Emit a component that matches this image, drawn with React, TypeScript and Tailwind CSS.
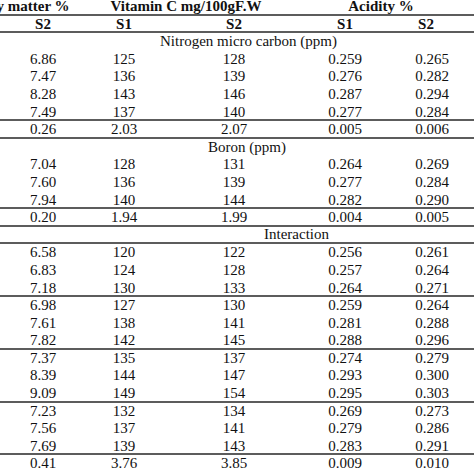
import React from 'react';

type Row =
  | { kind: 'data'; cells: string[]; line?: boolean }
  | { kind: 'section'; label: string; indent: string; line?: boolean };

const rows: Row[] = [
  { kind: 'section', label: 'Nitrogen micro carbon (ppm)', indent: 'pl-[160px]' },
  { kind: 'data', cells: ['6.86', '125', '128', '0.259', '0.265'] },
  { kind: 'data', cells: ['7.47', '136', '139', '0.276', '0.282'] },
  { kind: 'data', cells: ['8.28', '143', '146', '0.287', '0.294'] },
  { kind: 'data', cells: ['7.49', '137', '140', '0.277', '0.284'], line: true },
  { kind: 'data', cells: ['0.26', '2.03', '2.07', '0.005', '0.006'], line: true },
  { kind: 'section', label: 'Boron (ppm)', indent: 'pl-[208px]' },
  { kind: 'data', cells: ['7.04', '128', '131', '0.264', '0.269'] },
  { kind: 'data', cells: ['7.60', '136', '139', '0.277', '0.284'] },
  { kind: 'data', cells: ['7.94', '140', '144', '0.282', '0.290'], line: true },
  { kind: 'data', cells: ['0.20', '1.94', '1.99', '0.004', '0.005'], line: true },
  { kind: 'section', label: 'Interaction', indent: 'pl-[264px]', line: true },
  { kind: 'data', cells: ['6.58', '120', '122', '0.256', '0.261'] },
  { kind: 'data', cells: ['6.83', '124', '128', '0.257', '0.264'] },
  { kind: 'data', cells: ['7.18', '130', '133', '0.264', '0.271'], line: true },
  { kind: 'data', cells: ['6.98', '127', '130', '0.259', '0.264'] },
  { kind: 'data', cells: ['7.61', '138', '141', '0.281', '0.288'] },
  { kind: 'data', cells: ['7.82', '142', '145', '0.288', '0.296'], line: true },
  { kind: 'data', cells: ['7.37', '135', '137', '0.274', '0.279'] },
  { kind: 'data', cells: ['8.39', '144', '147', '0.293', '0.300'] },
  { kind: 'data', cells: ['9.09', '149', '154', '0.295', '0.303'], line: true },
  { kind: 'data', cells: ['7.23', '132', '134', '0.269', '0.273'] },
  { kind: 'data', cells: ['7.56', '137', '141', '0.279', '0.286'] },
  { kind: 'data', cells: ['7.69', '139', '143', '0.283', '0.291'], line: true },
  { kind: 'data', cells: ['0.41', '3.76', '3.85', '0.009', '0.010'] },
];

const grid = 'grid grid-cols-[86px_76px_144px_78px_96px] h-[17.6px] items-center';
const lineCls = 'border-b-2 border-[#5c5c5c]';

export default function App() {
  return (
    <div className="w-[474px] h-[474px] overflow-hidden bg-white text-[#111] text-[15px] leading-[17.6px] font-['Liberation_Serif',serif]">
      <div className="-mt-[2px] w-[480px]">
        {/* group header */}
        <div className={`${grid} font-bold ${lineCls}`}>
          <div className="-ml-[21px] whitespace-nowrap">Dry matter %</div>
          <div className="col-span-2 text-center pr-[20px] whitespace-nowrap">Vitamin C mg/100gF.W</div>
          <div className="col-span-2 text-center pr-[24px] whitespace-nowrap">Acidity %</div>
        </div>
        <div className={`${grid} font-bold ${lineCls}`}>
          <div className="text-center">S2</div>
          <div className="text-center">S1</div>
          <div className="text-center">S2</div>
          <div className="text-center">S1</div>
          <div className="text-center pr-[12px]">S2</div>
        </div>

        {rows.map((r, i) =>
          r.kind === 'section' ? (
            <div key={i} className={`h-[17.6px] flex items-center whitespace-nowrap ${r.indent} ${r.line ? lineCls : ''}`}>
              {r.label}
            </div>
          ) : (
            <div key={i} className={`${grid} ${r.line ? lineCls : ''}`}>
              {r.cells.map((c, j) => (
                <div key={j} className="text-center">{c}</div>
              ))}
            </div>
          )
        )}
      </div>
    </div>
  );
}
